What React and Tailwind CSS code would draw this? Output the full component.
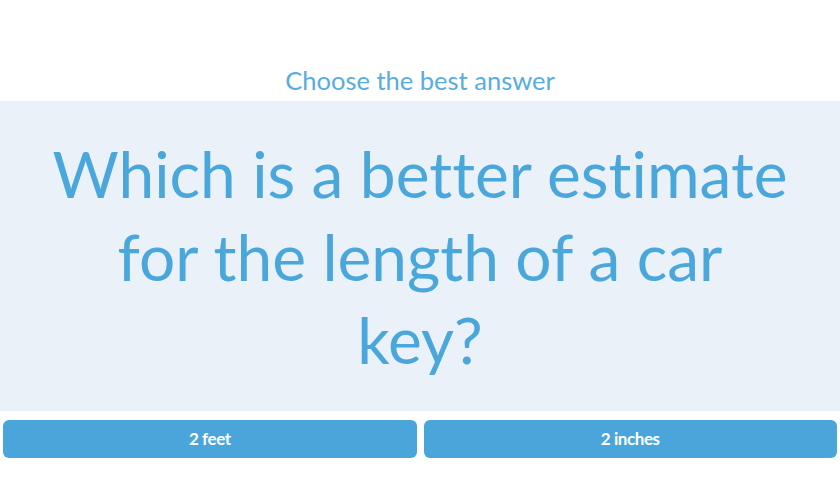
export default function App() {
  const answers = ["2 feet", "2 inches"];

  return (
    <div className="min-h-screen bg-white" style={{ fontFamily: "Lato, 'Noto Sans', sans-serif" }}>
      <div className="flex h-[101px] items-end justify-center pb-[8px]">
        <p className="text-[25.5px] leading-none text-[#58ade0]">Choose the best answer</p>
      </div>

      <section className="flex h-[310px] items-center justify-center bg-[#eaf1f9] px-4">
        <h1 className="max-w-[737px] text-center text-[64px] leading-[83px] text-[#4aa7dc] [font-variant-ligatures:none]">
          Which is a better estimate for the length of a car key?
        </h1>
      </section>

      <div className="mt-[9px] grid grid-cols-2 gap-[7px] px-[3px]">
        {answers.map((answer) => (
          <button
            key={answer}
            className="h-[38px] rounded-[6px] bg-[#4aa6da] text-[17px] font-bold tracking-tight text-white"
          >
            {answer}
          </button>
        ))}
      </div>
    </div>
  );
}
